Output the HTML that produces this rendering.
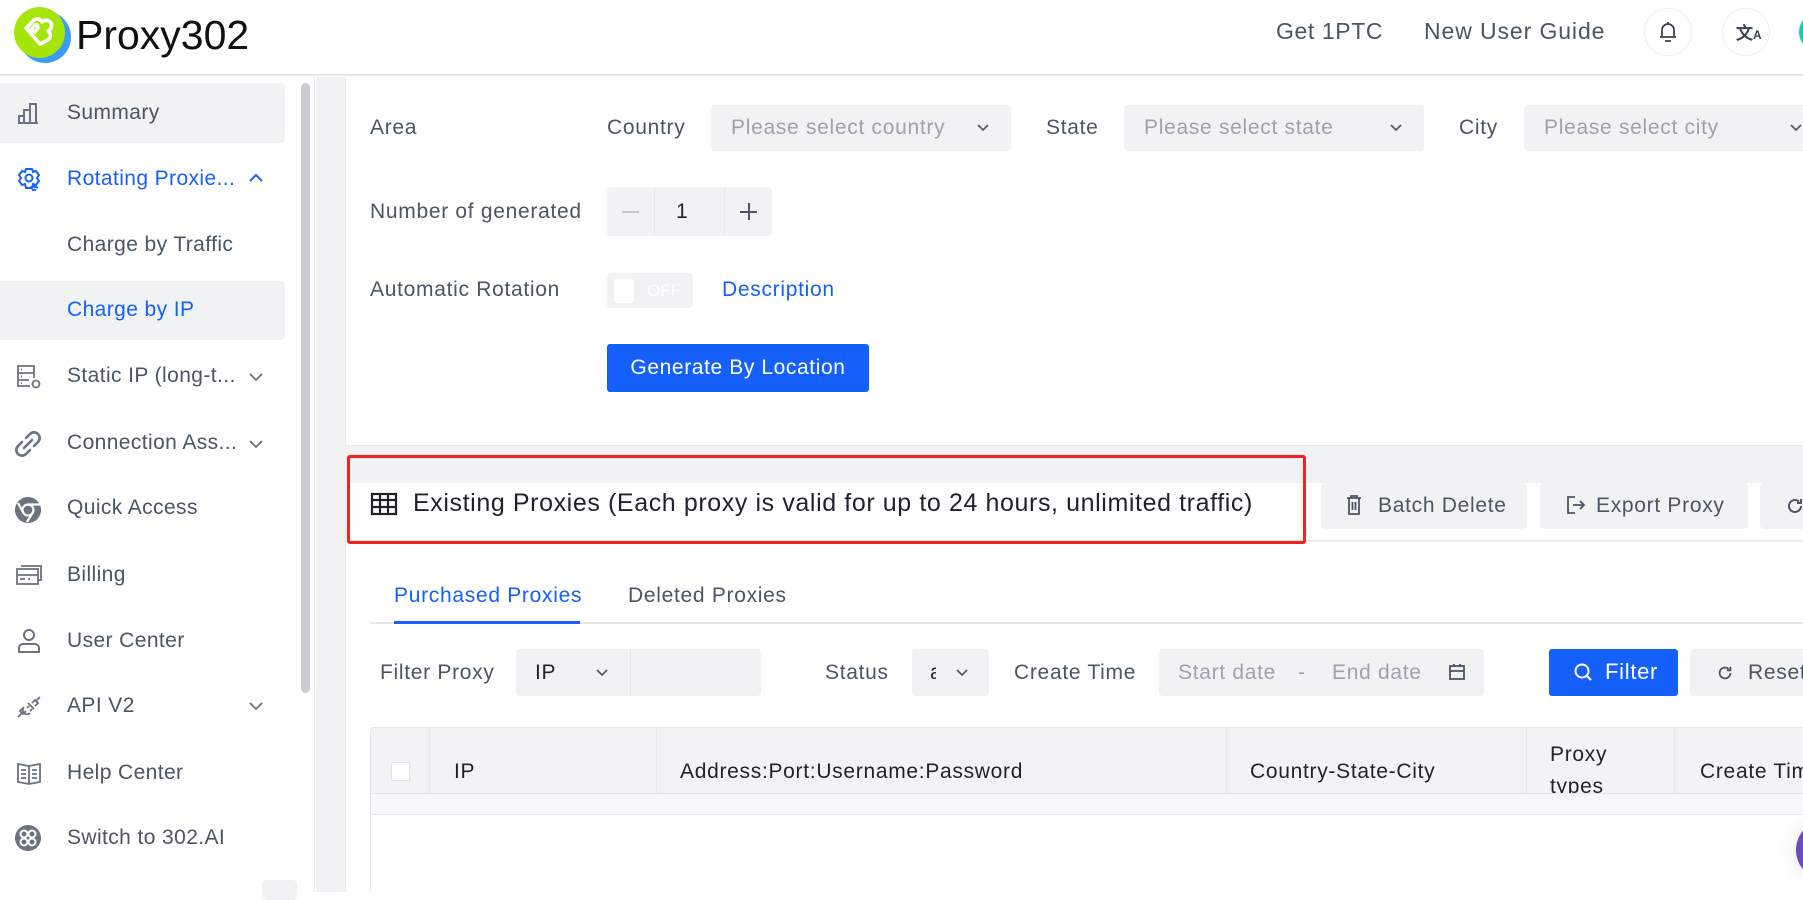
<!DOCTYPE html>
<html><head><meta charset="utf-8"><style>
*{margin:0;padding:0;box-sizing:border-box}
body{width:1803px;height:892px;overflow:hidden;background:#fff;font-family:"Liberation Sans",sans-serif;position:relative;color:#4b5563}
.a{position:absolute;white-space:nowrap}
.t{font-size:21px;line-height:24px;letter-spacing:0.7px}
.side{color:#4b5563;font-size:21px;letter-spacing:0.4px}
.gray{background:#f1f2f4;border-radius:4px}
.ph{color:#9ca3af}
svg{position:absolute}
</style></head><body>
<!-- header -->
<div class="a" style="left:0;top:0;width:1803px;height:76px;border-bottom:2px solid #e6e8eb;background:#fff"></div>
<div class="a" style="left:19px;top:11px;width:52px;height:52px;border-radius:50%;background:#3b9cf7"></div>
<div class="a" style="left:14px;top:7px;width:51px;height:51px;border-radius:50%;background:#a5e60a"></div>
<svg style="left:20px;top:14px" width="38" height="36" viewBox="0 0 38 36"><path d="M6 14 L14 6 Q19 3 22 8 Q27 4 31 9 Q33 14 28 17 Q33 21 28 26 L20 30 Z M11 15 L15 11 Q18 10 18 14 L15 18 Z" fill="none" stroke="#fff" stroke-width="3.5" stroke-linejoin="round"/></svg>
<div class="a" style="left:76px;top:10px;font-size:41px;line-height:50px;color:#111">Proxy302</div>
<div class="a t" style="left:1276px;top:19px;font-size:23px;letter-spacing:0.6px">Get 1PTC</div>
<div class="a t" style="left:1424px;top:19px;font-size:23px;letter-spacing:0.9px">New User Guide</div>
<div class="a" style="left:1644px;top:8px;width:48px;height:48px;border-radius:50%;border:1px solid #eceef1"></div>
<svg style="left:1658px;top:20px" width="20" height="24" viewBox="0 0 20 24"><path d="M4 17 V10 a6 6 0 0 1 12 0 V17 Z M2 17 H18 M7 21 H13 M10 2 V4" fill="none" stroke="#374151" stroke-width="1.8" stroke-linejoin="round"/></svg>
<div class="a" style="left:1722px;top:8px;width:48px;height:48px;border-radius:50%;border:1px solid #eceef1"></div>
<div class="a" style="left:1736px;top:19px;font-size:17px;font-weight:bold;color:#374151">文<span style="font-size:12px">A</span></div>
<div class="a" style="left:1799px;top:12px;width:40px;height:40px;border-radius:50%;background:#1fc8a8"></div>

<!-- sidebar -->
<div class="a" style="left:0;top:77px;width:315px;height:815px;border-right:1px solid #e6e8eb;background:#fff"></div>
<div class="a" style="left:301px;top:83px;width:9px;height:610px;border-radius:5px;background:#c9ccd1"></div>
<div class="a gray" style="left:0;top:83px;width:285px;height:60px;border-radius:0 4px 4px 0"></div>
<div class="a gray" style="left:0;top:281px;width:285px;height:59px;border-radius:0 4px 4px 0"></div>
<svg style="left:16px;top:101px" width="24" height="24" viewBox="0 0 24 24" fill="none" stroke="#6b7280" stroke-width="2"><path d="M2 22H22M3 22V15H8V22M8 22V9H14V22M14 22V3H20V22"/></svg>
<div class="a side" style="left:67px;top:101px">Summary</div>
<svg style="left:15px;top:166px" width="28" height="28" viewBox="0 0 28 28" fill="none" stroke="#1560fa" stroke-width="2"><path d="M11 3H17L18 6L21 5L24 9L22 12L24 15L21 19L18 18L17 22H11L10 18L7 19L4 15L6 12L4 9L7 5L10 6Z"/><circle cx="14" cy="12" r="3.5"/><path d="M15 22Q19 19 23 22M17 24.5Q19 23 21 24.5"/></svg>
<div class="a side" style="left:67px;top:167px;color:#1560fa">Rotating Proxie...</div>
<svg style="left:248px;top:173px" width="16" height="10" viewBox="0 0 16 10"><path d="M2 8L8 2L14 8" fill="none" stroke="#1560fa" stroke-width="2"/></svg>
<div class="a side" style="left:67px;top:233px">Charge by Traffic</div>
<div class="a side" style="left:67px;top:298px;color:#1560fa">Charge by IP</div>
<svg style="left:16px;top:364px" width="26" height="26" viewBox="0 0 26 26" fill="none" stroke="#6b7280" stroke-width="1.8"><path d="M14 22H2V2H18V14M2 9H18M2 16H13"/><circle cx="20" cy="20" r="3.5"/><path d="M5 5.5h1M5 12.5h1M5 19h1"/></svg>
<div class="a side" style="left:67px;top:364px">Static IP (long-t...</div>
<svg style="left:248px;top:372px" width="16" height="10" viewBox="0 0 16 10"><path d="M2 2L8 8L14 2" fill="none" stroke="#6b7280" stroke-width="1.8"/></svg>
<svg style="left:14px;top:430px" width="28" height="28" viewBox="0 0 28 28" fill="none" stroke="#6b7280" stroke-width="2.6" stroke-linecap="round"><path d="M12 8L16 4a5 5 0 0 1 8 8L20 16M8 12L4 16a5 5 0 0 0 8 8L16 20M10 18L18 10"/></svg>
<div class="a side" style="left:67px;top:431px">Connection Ass...</div>
<svg style="left:248px;top:439px" width="16" height="10" viewBox="0 0 16 10"><path d="M2 2L8 8L14 2" fill="none" stroke="#6b7280" stroke-width="1.8"/></svg>
<svg style="left:14px;top:496px" width="28" height="28" viewBox="0 0 28 28"><circle cx="14" cy="14" r="13" fill="#6b7280"/><circle cx="14" cy="14" r="5.5" fill="none" stroke="#fff" stroke-width="2.2"/><path d="M14 8.5H26M9.5 17L4 7M18.5 17L13 26" stroke="#fff" stroke-width="2.2"/></svg>
<div class="a side" style="left:67px;top:496px">Quick Access</div>
<svg style="left:15px;top:563px" width="28" height="24" viewBox="0 0 28 24" fill="none" stroke="#6b7280" stroke-width="1.8"><rect x="2" y="6" width="21" height="15"/><path d="M6 3H26V17H23M2 12H23M5 16H10M13 16H15"/></svg>
<div class="a side" style="left:67px;top:563px">Billing</div>
<svg style="left:16px;top:628px" width="26" height="26" viewBox="0 0 26 26" fill="none" stroke="#6b7280" stroke-width="2"><circle cx="13" cy="7" r="5"/><path d="M3 24V20a4 4 0 0 1 4-4H19a4 4 0 0 1 4 4V24Z"/></svg>
<div class="a side" style="left:67px;top:629px">User Center</div>
<svg style="left:15px;top:694px" width="28" height="26" viewBox="0 0 28 26" fill="none" stroke="#6b7280" stroke-width="1.8"><path d="M3 23L7 19M25 3L21 7M9 13a4 4 0 0 0 6 6M13 9l6 6M11 17l-3 3-3-3 3-3M17 9l3-3 3 3-3 3M12 14l2-2M15 17l2-2"/></svg>
<div class="a side" style="left:67px;top:694px">API V2</div>
<svg style="left:248px;top:701px" width="16" height="10" viewBox="0 0 16 10"><path d="M2 2L8 8L14 2" fill="none" stroke="#6b7280" stroke-width="1.8"/></svg>
<svg style="left:16px;top:760px" width="26" height="26" viewBox="0 0 26 26" fill="none" stroke="#6b7280" stroke-width="1.8"><path d="M2 4L13 6L24 4V22L13 24L2 22ZM13 6V24M5 10H10M5 14H10M5 18H10M16 10H21M16 14H21M16 18H21"/></svg>
<div class="a side" style="left:67px;top:761px">Help Center</div>
<svg style="left:14px;top:824px" width="28" height="28" viewBox="0 0 28 28"><circle cx="14" cy="14" r="13" fill="#6b7280"/><g fill="none" stroke="#fff" stroke-width="2"><circle cx="10" cy="10" r="3.5"/><circle cx="18" cy="10" r="3.5"/><circle cx="10" cy="18" r="3.5"/><circle cx="18" cy="18" r="3.5"/></g></svg>
<div class="a side" style="left:67px;top:826px">Switch to 302.AI</div>
<div class="a gray" style="left:262px;top:880px;width:35px;height:20px"></div>

<!-- content bg -->
<div class="a" style="left:316px;top:77px;width:1487px;height:815px;background:#f1f2f4"></div>
<!-- card 1 -->
<div class="a" style="left:345px;top:77px;width:1458px;height:369px;background:#fff;border-left:1px solid #e6e8eb;border-bottom:1px solid #e6e8eb"></div>
<div class="a t" style="left:370px;top:116px">Area</div>
<div class="a t" style="left:607px;top:116px">Country</div>
<div class="a gray" style="left:711px;top:105px;width:300px;height:46px"></div>
<div class="a t ph" style="left:731px;top:116px">Please select country</div>
<svg style="left:976px;top:123px" width="14" height="9" viewBox="0 0 14 9"><path d="M2 2L7 7L12 2" fill="none" stroke="#4b5563" stroke-width="1.6"/></svg>
<div class="a t" style="left:1046px;top:116px">State</div>
<div class="a gray" style="left:1124px;top:105px;width:300px;height:46px"></div>
<div class="a t ph" style="left:1144px;top:116px">Please select state</div>
<svg style="left:1389px;top:123px" width="14" height="9" viewBox="0 0 14 9"><path d="M2 2L7 7L12 2" fill="none" stroke="#4b5563" stroke-width="1.6"/></svg>
<div class="a t" style="left:1459px;top:116px">City</div>
<div class="a gray" style="left:1524px;top:105px;width:300px;height:46px"></div>
<div class="a t ph" style="left:1544px;top:116px">Please select city</div>
<svg style="left:1789px;top:123px" width="14" height="9" viewBox="0 0 14 9"><path d="M2 2L7 7L12 2" fill="none" stroke="#4b5563" stroke-width="1.6"/></svg>

<div class="a t" style="left:370px;top:200px">Number of generated</div>
<div class="a gray" style="left:607px;top:187px;width:165px;height:49px"></div>
<div class="a" style="left:654px;top:187px;width:71px;height:49px;border-left:1px solid #e5e7eb;border-right:1px solid #e5e7eb"></div>
<div class="a" style="left:622px;top:211px;width:17px;height:1.5px;background:#c4c8ce"></div>
<div class="a t" style="left:676px;top:200px;color:#1f2329">1</div>
<div class="a" style="left:740px;top:211px;width:17px;height:1.5px;background:#4b5563"></div>
<div class="a" style="left:748px;top:203px;width:1.5px;height:17px;background:#4b5563"></div>

<div class="a t" style="left:370px;top:278px">Automatic Rotation</div>
<div class="a gray" style="left:607px;top:273px;width:86px;height:35px"></div>
<div class="a" style="left:614px;top:279px;width:20px;height:24px;background:#fff;border-radius:3px"></div>
<div class="a" style="left:647px;top:281px;font-size:17px;color:#fff">OFF</div>
<div class="a t" style="left:722px;top:278px;color:#1560fa">Description</div>
<div class="a" style="left:607px;top:344px;width:262px;height:48px;background:#1560fa;border-radius:3px;color:#fff;font-size:21px;letter-spacing:0.6px;line-height:48px;text-align:center">Generate By Location</div>

<!-- card 2 -->
<div class="a" style="left:345px;top:483px;width:1458px;height:409px;background:#fff;border-left:1px solid #e6e8eb"></div>
<div class="a" style="left:345px;top:540px;width:1458px;height:2px;background:#e9ebee"></div>
<svg style="left:370px;top:492px" width="28" height="24" viewBox="0 0 28 24" fill="none" stroke="#1f2329" stroke-width="2.2"><rect x="2" y="2" width="24" height="20"/><path d="M2 8H26M2 15H26M10 2V22M18 2V22"/></svg>
<div class="a" style="left:413px;top:488px;font-size:25px;letter-spacing:0.6px;line-height:30px;color:#1f2329">Existing Proxies (Each proxy is valid for up to 24 hours, unlimited traffic)</div>
<div class="a" style="left:347px;top:455px;width:959px;height:89px;border:3px solid #f5221b;border-radius:3px"></div>

<div class="a gray" style="left:1321px;top:483px;width:206px;height:46px"></div>
<svg style="left:1345px;top:494px" width="18" height="22" viewBox="0 0 18 22" fill="none" stroke="#4b5563" stroke-width="1.8"><path d="M2 4H16M6 4V2H12V4M4 4V20H14V4M7.5 8V16M10.5 8V16"/></svg>
<div class="a t" style="left:1378px;top:494px">Batch Delete</div>
<div class="a gray" style="left:1540px;top:483px;width:208px;height:46px"></div>
<svg style="left:1565px;top:494px" width="22" height="22" viewBox="0 0 22 22" fill="none" stroke="#4b5563" stroke-width="1.8"><path d="M10 3H3V19H10M8 11H19M15 7L19 11L15 15"/></svg>
<div class="a t" style="left:1596px;top:494px">Export Proxy</div>
<div class="a gray" style="left:1760px;top:483px;width:60px;height:46px"></div>
<svg style="left:1785px;top:496px" width="20" height="20" viewBox="0 0 20 20" fill="none" stroke="#4b5563" stroke-width="2"><path d="M16 10a6 6 0 1 1-2-4.5M16 3V7H12"/></svg>

<div class="a" style="left:370px;top:622px;width:1433px;height:2px;background:#e5e7eb"></div>
<div class="a t" style="left:394px;top:584px;color:#1560fa">Purchased Proxies</div>
<div class="a" style="left:394px;top:621px;width:186px;height:3px;background:#1560fa"></div>
<div class="a t" style="left:628px;top:584px">Deleted Proxies</div>

<div class="a t" style="left:380px;top:661px">Filter Proxy</div>
<div class="a gray" style="left:516px;top:649px;width:245px;height:47px"></div>
<div class="a" style="left:630px;top:649px;width:1px;height:47px;background:#e5e7eb"></div>
<div class="a t" style="left:535px;top:661px;color:#1f2329">IP</div>
<svg style="left:595px;top:668px" width="14" height="9" viewBox="0 0 14 9"><path d="M2 2L7 7L12 2" fill="none" stroke="#4b5563" stroke-width="1.6"/></svg>
<div class="a t" style="left:825px;top:661px">Status</div>
<div class="a gray" style="left:912px;top:649px;width:77px;height:47px"></div>
<div class="a" style="left:930px;top:661px;width:6px;overflow:hidden;font-size:21px;line-height:24px;color:#1f2329">a</div>
<svg style="left:955px;top:668px" width="14" height="9" viewBox="0 0 14 9"><path d="M2 2L7 7L12 2" fill="none" stroke="#4b5563" stroke-width="1.6"/></svg>
<div class="a t" style="left:1014px;top:661px">Create Time</div>
<div class="a gray" style="left:1159px;top:649px;width:325px;height:47px"></div>
<div class="a t ph" style="left:1178px;top:661px">Start date</div>
<div class="a t ph" style="left:1298px;top:661px">-</div>
<div class="a t ph" style="left:1332px;top:661px">End date</div>
<svg style="left:1448px;top:663px" width="18" height="18" viewBox="0 0 18 18" fill="none" stroke="#4b5563" stroke-width="1.8"><rect x="2" y="3" width="14" height="13"/><path d="M2 8H16M6 1V4M12 1V4"/></svg>
<div class="a" style="left:1549px;top:649px;width:129px;height:47px;background:#1560fa;border-radius:3px"></div>
<svg style="left:1573px;top:662px" width="20" height="20" viewBox="0 0 20 20" fill="none" stroke="#fff" stroke-width="2"><circle cx="9" cy="9" r="6.5"/><path d="M14 14L18 18"/></svg>
<div class="a t" style="left:1605px;top:660px;color:#fff;font-size:22px">Filter</div>
<div class="a gray" style="left:1690px;top:649px;width:130px;height:47px"></div>
<svg style="left:1716px;top:664px" width="18" height="18" viewBox="0 0 20 20" fill="none" stroke="#4b5563" stroke-width="2"><path d="M16 10a6 6 0 1 1-2-4.5M16 3V7H12"/></svg>
<div class="a t" style="left:1748px;top:661px">Reset</div>

<!-- table -->
<div class="a" style="left:370px;top:727px;width:1440px;height:67px;background:#f2f3f5;border:1px solid #e5e7eb;border-radius:4px 0 0 0"></div>
<div class="a" style="left:370px;top:794px;width:1440px;height:21px;background:#f7f8fa;border-bottom:1px solid #e5e7eb;border-left:1px solid #e5e7eb"></div>
<div class="a" style="left:370px;top:815px;width:1px;height:77px;background:#e5e7eb"></div>
<div class="a" style="left:391px;top:762px;width:19px;height:19px;background:#fff;border:1px solid #e1e3e6;border-radius:2px"></div>
<div class="a" style="left:429px;top:727px;width:1px;height:67px;background:#e5e7eb"></div>
<div class="a" style="left:656px;top:727px;width:1px;height:67px;background:#e5e7eb"></div>
<div class="a" style="left:1226px;top:727px;width:1px;height:67px;background:#e5e7eb"></div>
<div class="a" style="left:1526px;top:727px;width:1px;height:67px;background:#e5e7eb"></div>
<div class="a" style="left:1674px;top:727px;width:1px;height:67px;background:#e5e7eb"></div>
<div class="a t" style="left:454px;top:760px;color:#1f2329">IP</div>
<div class="a t" style="left:680px;top:760px;color:#1f2329">Address:Port:Username:Password</div>
<div class="a t" style="left:1250px;top:760px;color:#1f2329">Country-State-City</div>
<div class="a t" style="left:1550px;top:743px;color:#1f2329">Proxy</div>
<div class="a" style="left:1550px;top:775px;height:18px;overflow:hidden;font-size:21px;letter-spacing:0.7px;line-height:24px;color:#1f2329">types</div>
<div class="a t" style="left:1700px;top:760px;color:#1f2329">Create Time</div>
<div class="a" style="left:1796px;top:820px;width:60px;height:60px;border-radius:50%;background:#6a4cc0;box-shadow:0 0 20px rgba(0,0,0,.1)"></div>
</body></html>
